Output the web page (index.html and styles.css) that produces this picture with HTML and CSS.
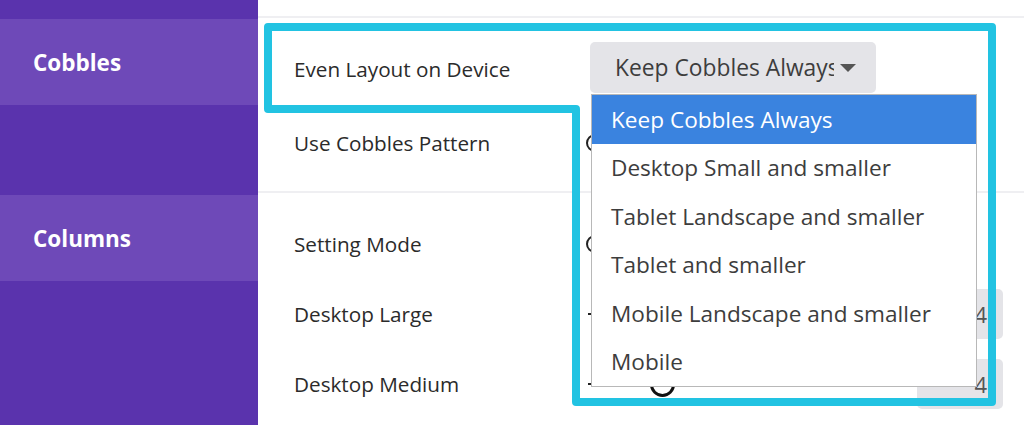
FILE: index.html
```html
<!DOCTYPE html>
<html>
<head>
<meta charset="utf-8">
<link rel="stylesheet" href="styles.css">
</head>
<body>
<div class="page">
  <aside class="sidebar">
    <div class="side-section s1">
      <div class="side-head">Cobbles</div>
    </div>
    <div class="side-section s2">
      <div class="side-head">Columns</div>
    </div>
  </aside>
  <main class="content">
    <section class="group g1">
      <div class="row">
        <div class="label">Even Layout on Device</div>
        <div class="control">
          <div class="select">
            <div class="select-btn">
              <span class="select-text">Keep Cobbles Always</span>
              <span class="caret"></span>
            </div>
            <ul class="menu">
              <li class="active">Keep Cobbles Always</li>
              <li>Desktop Small and smaller</li>
              <li>Tablet Landscape and smaller</li>
              <li>Tablet and smaller</li>
              <li>Mobile Landscape and smaller</li>
              <li>Mobile</li>
            </ul>
          </div>
        </div>
      </div>
      <div class="row">
        <div class="label">Use Cobbles Pattern</div>
        <div class="control"><span class="radio"></span></div>
      </div>
    </section>
    <section class="group g2">
      <div class="row">
        <div class="label">Setting Mode</div>
        <div class="control"><span class="radio"></span></div>
      </div>
      <div class="row">
        <div class="label">Desktop Large</div>
        <div class="control slider-ctl">
          <div class="slider"><span class="fill"></span><span class="knob"></span><span class="rest"></span></div>
          <div class="num">4</div>
        </div>
      </div>
      <div class="row">
        <div class="label">Desktop Medium</div>
        <div class="control slider-ctl">
          <div class="slider"><span class="fill"></span><span class="knob"></span><span class="rest"></span></div>
          <div class="num">4</div>
        </div>
      </div>
    </section>
  </main>
</div>
<svg class="highlight" width="1024" height="425" viewBox="0 0 1024 425">
  <path d="M268 27 H992 V402 H576 V109 H268 Z" fill="none" stroke="#22c3e2" stroke-width="8" stroke-linejoin="round"/>
</svg>
</body>
</html>
```
FILE: styles.css
```css
* { box-sizing: border-box; }
html, body { margin: 0; padding: 0; }
body {
  width: 1024px;
  height: 425px;
  overflow: hidden;
  font-family: "Open Sans", "DejaVu Sans", sans-serif;
  background: #fff;
  position: relative;
}
.page { display: flex; height: 425px; }
.sidebar {
  width: 258px;
  flex: none;
  background: #5a33ad;
  padding-top: 19px;
}
.side-section.s1 { height: 176px; }
.side-head {
  height: 86px;
  background: #6e49b8;
  color: #fff;
  font-weight: 700;
  font-size: 22.5px;
  display: flex;
  align-items: center;
  padding-left: 33px;
}
.content {
  flex: 1;
  padding-top: 16px;
}
.group {
  border-top: 2px solid #efeff2;
}
.g1 { padding: 14px 0 11px; }
.g2 { padding-top: 16px; }
.row {
  height: 74px;
  display: flex;
  align-items: center;
  padding-left: 36px;
}
.g2 .row { height: 70px; }
.label {
  width: 296px;
  flex: none;
  font-size: 20.7px;
  color: #2b2b2b;
}
.control {
  flex: 1;
  display: flex;
  align-items: center;
  padding-right: 21px;
}
.select { position: relative; margin-top: -3px; }
.select-btn {
  width: 286px;
  height: 51px;
  background: #e4e4e8;
  border-radius: 5px;
  display: flex;
  align-items: center;
  padding-left: 25px;
}
.select-text {
  width: 219px;
  flex: none;
  overflow: hidden;
  white-space: nowrap;
  font-size: 22.8px;
  color: #3d3d3d;
}
.caret {
  margin-left: 6px;
  width: 0; height: 0;
  border-left: 8px solid transparent;
  border-right: 8px solid transparent;
  border-top: 8px solid #555;
}
.menu {
  position: absolute;
  top: 52px;
  left: 1px;
  width: 386px;
  margin: 0;
  padding: 0;
  list-style: none;
  background: #fff;
  border: 1px solid #b8b8b8;
  z-index: 5;
}
.menu li {
  height: 48.5px;
  display: flex;
  align-items: center;
  padding-left: 19px;
  font-size: 22.6px;
  color: #3d3d3d;
  white-space: nowrap;
}
.menu li.active { background: #3a83df; color: #fff; }
.radio {
  margin-left: -4px;
  width: 18px; height: 18px;
  border: 2px solid #222;
  border-radius: 50%;
}
.slider {
  flex: 1;
  display: flex;
  align-items: center;
  margin-left: -2px;
  margin-right: 12px;
}
.fill { width: 62px; height: 2px; background: #222; }
.knob {
  width: 25px; height: 25px;
  border: 3px solid #111;
  border-radius: 50%;
  background: #fff;
  flex: none;
}
.rest { flex: 1; height: 2px; background: #e0e0e4; }
.num {
  width: 86px;
  height: 50px;
  background: #e4e4e8;
  border-radius: 5px;
  display: flex;
  align-items: center;
  justify-content: flex-end;
  padding-right: 16px;
  font-size: 22px;
  color: #555;
}
.highlight {
  position: absolute;
  left: 0; top: 0;
  z-index: 10;
  pointer-events: none;
}
```
